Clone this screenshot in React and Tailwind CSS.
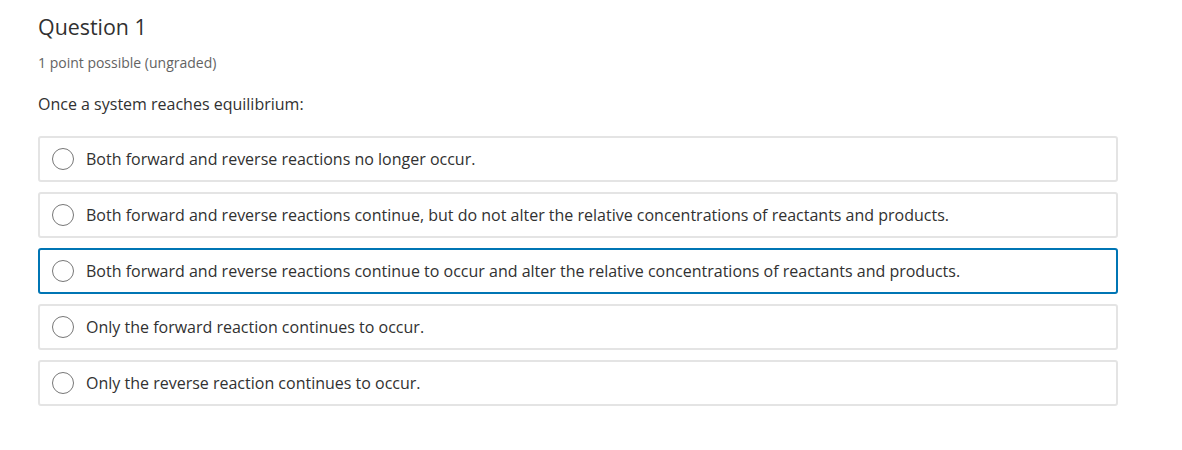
export default function App() {
  const options = [
    "Both forward and reverse reactions no longer occur.",
    "Both forward and reverse reactions continue, but do not alter the relative concentrations of reactants and products.",
    "Both forward and reverse reactions continue to occur and alter the relative concentrations of reactants and products.",
    "Only the forward reaction continues to occur.",
    "Only the reverse reaction continues to occur.",
  ];
  return (
    <div className="w-[1182px] h-[450px] bg-white pl-[38px] pr-[64px]" style={{ fontFamily: '"Open Sans", sans-serif' }}>
      <h3 className="pt-[11px] text-[21.4px] leading-[32px] text-[#313131] font-normal">Question 1</h3>
      <div className="mt-[12px] text-[14px] leading-[16px] text-[#636363]">1 point possible (ungraded)</div>
      <p className="mt-[23px] text-[16px] leading-[20px] text-[#313131]">Once a system reaches equilibrium:</p>
      <div className="mt-[22px] flex flex-col gap-[10px]">
        {options.map((o, i) => (
          <label
            key={i}
            className={
              "flex items-center h-[46px] rounded-[3px] border-2 pl-[12px] " +
              (i === 2 ? "border-[#0075b4]" : "border-[#e4e4e4]")
            }
          >
            <span className="w-[22px] h-[22px] rounded-full border border-[#777777] bg-white shrink-0" />
            <span className="ml-[12px] text-[16px] text-[#313131]">{o}</span>
          </label>
        ))}
      </div>
    </div>
  );
}
